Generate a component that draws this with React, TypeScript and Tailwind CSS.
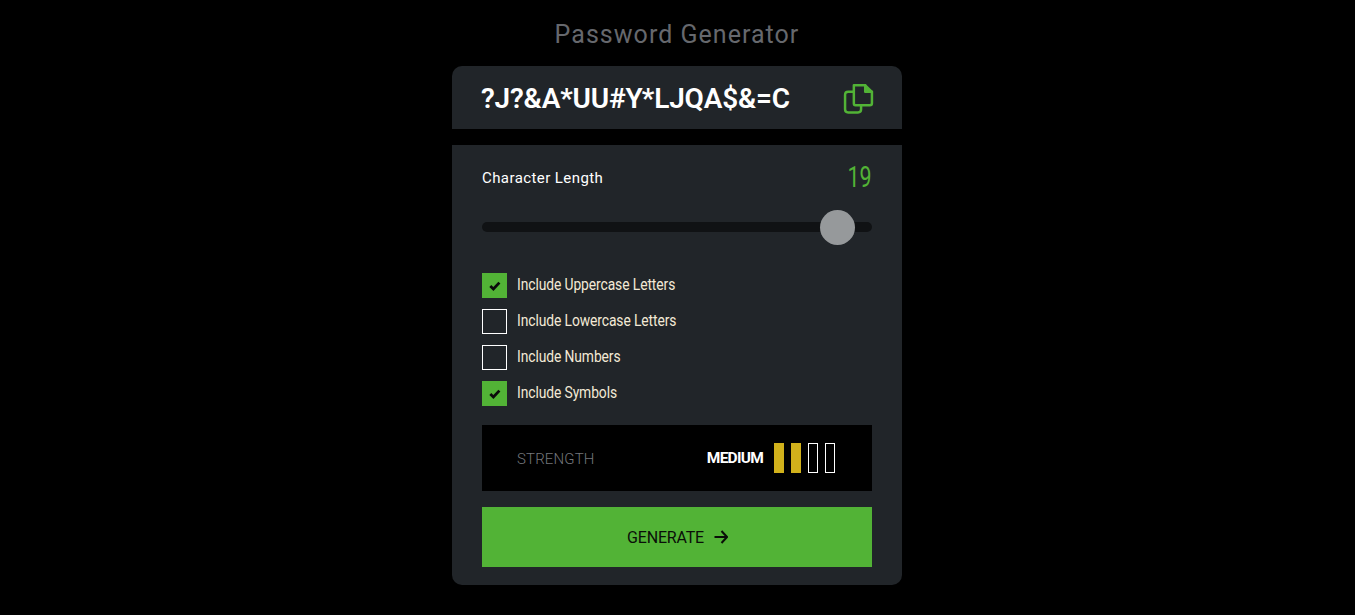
import React from "react";

function Check({ on, label }: { on: boolean; label: string }) {
  return (
    <div className="flex items-center gap-[10px] h-[25px]">
      {on ? (
        <div className="w-[25px] h-[25px] bg-[#52b336] flex items-center justify-center">
          <svg width="12" height="10" viewBox="0 0 12 10"><path d="M1.3 5 L4.4 8 L10.4 1.6" fill="none" stroke="#0b0b0b" strokeWidth="2.8" /></svg>
        </div>
      ) : (
        <div className="w-[25px] h-[25px] border border-white" />
      )}
      <span className="mt-[-2px] text-[16px] leading-[25px] text-[#f3e9d6] [font-family:'Roboto',sans-serif] tracking-[-0.1px] [transform:scaleX(0.865)] origin-left whitespace-nowrap">{label}</span>
    </div>
  );
}

export default function App() {
  return (
    <div className="w-full h-[615px] bg-black pr-px flex flex-col items-center [font-family:'Roboto',sans-serif] overflow-hidden">
      <h1 className="mt-[19px] h-[32px] text-[25px] leading-[32px] tracking-[1.03px] text-[#66686d] font-normal">Password Generator</h1>
      <div className="mt-[15px] w-[450px]">
        <div className="h-[63px] bg-[#212529] rounded-t-[10px] pl-[29px] pr-[28px] flex items-center justify-between">
          <span className="mt-[2px] text-[28px] leading-[34px] font-semibold text-white tracking-[-0.18px]">?J?&amp;A*UU#Y*LJQA$&amp;=C</span>
          <svg className="mt-[1px]" width="31" height="31" viewBox="0 0 30 30" fill="none" stroke="#52b336" strokeWidth="2.4" strokeLinejoin="round" strokeLinecap="round">
            <path d="M10.5 2.2 H21.5 L28 8.5 V19.5 Q28 21.5 26 21.5 H12 Q10.5 21.5 10.5 19.5 Z" />
            <path d="M21.5 2.2 V8.5 H28" fill="#52b336" />
            <path d="M10 8.5 H5 Q2 8.5 2 11.5 V25.5 Q2 28.5 5 28.5 H14.5 Q17.5 28.5 17.5 25.5 V22" />
          </svg>
        </div>
        <div className="mt-[16px] h-[440px] bg-[#212529] rounded-b-[10px] px-[30px] pt-[17px]">
          <div className="flex items-center justify-between h-[32px]">
            <span className="text-[15px] text-white tracking-[0.42px]">Character Length</span>
            <span className="text-[29px] font-normal text-[#52b336] [transform:scaleX(0.74)] origin-right">19</span>
          </div>
          <div className="relative mt-[28px] h-[10px] rounded-full bg-[#101214]">
            <div className="absolute left-[338px] top-[-12px] w-[35px] h-[35px] rounded-full bg-[#96999b]" />
          </div>
          <div className="mt-[41px] flex flex-col gap-[11px]">
            <Check on label="Include Uppercase Letters" />
            <Check on={false} label="Include Lowercase Letters" />
            <Check on={false} label="Include Numbers" />
            <Check on label="Include Symbols" />
          </div>
          <div className="mt-[19px] h-[66px] bg-black flex items-center justify-between pl-[35px] pr-[37px]">
            <span className="mt-[2px] text-[15px] text-[#74767b] font-light tracking-[0.15px]">STRENGTH</span>
            <div className="flex items-center">
              <span className="mt-[2px] mr-[11px] text-[15.5px] font-bold text-white tracking-[-0.75px]">MEDIUM</span>
              <div className="flex gap-[7px]">
                <div className="w-[10px] h-[30px] bg-[#d1b11b]" />
                <div className="w-[10px] h-[30px] bg-[#d1b11b]" />
                <div className="w-[10px] h-[30px] border border-white" />
                <div className="w-[10px] h-[30px] border border-white" />
              </div>
            </div>
          </div>
          <div className="mt-[16px] h-[60px] bg-[#52b336] flex items-center justify-center gap-[10px] pl-px text-[#0a0f08]">
            <span className="mt-[2px] text-[16px] tracking-[-0.2px]">GENERATE</span>
            <svg width="14" height="14" viewBox="0 0 14 14" fill="none" stroke="#0a0f08" strokeWidth="2"><path d="M0.5 7 H13 M7.5 1 L13 7 L7.5 13" /></svg>
          </div>
        </div>
      </div>
    </div>
  );
}
